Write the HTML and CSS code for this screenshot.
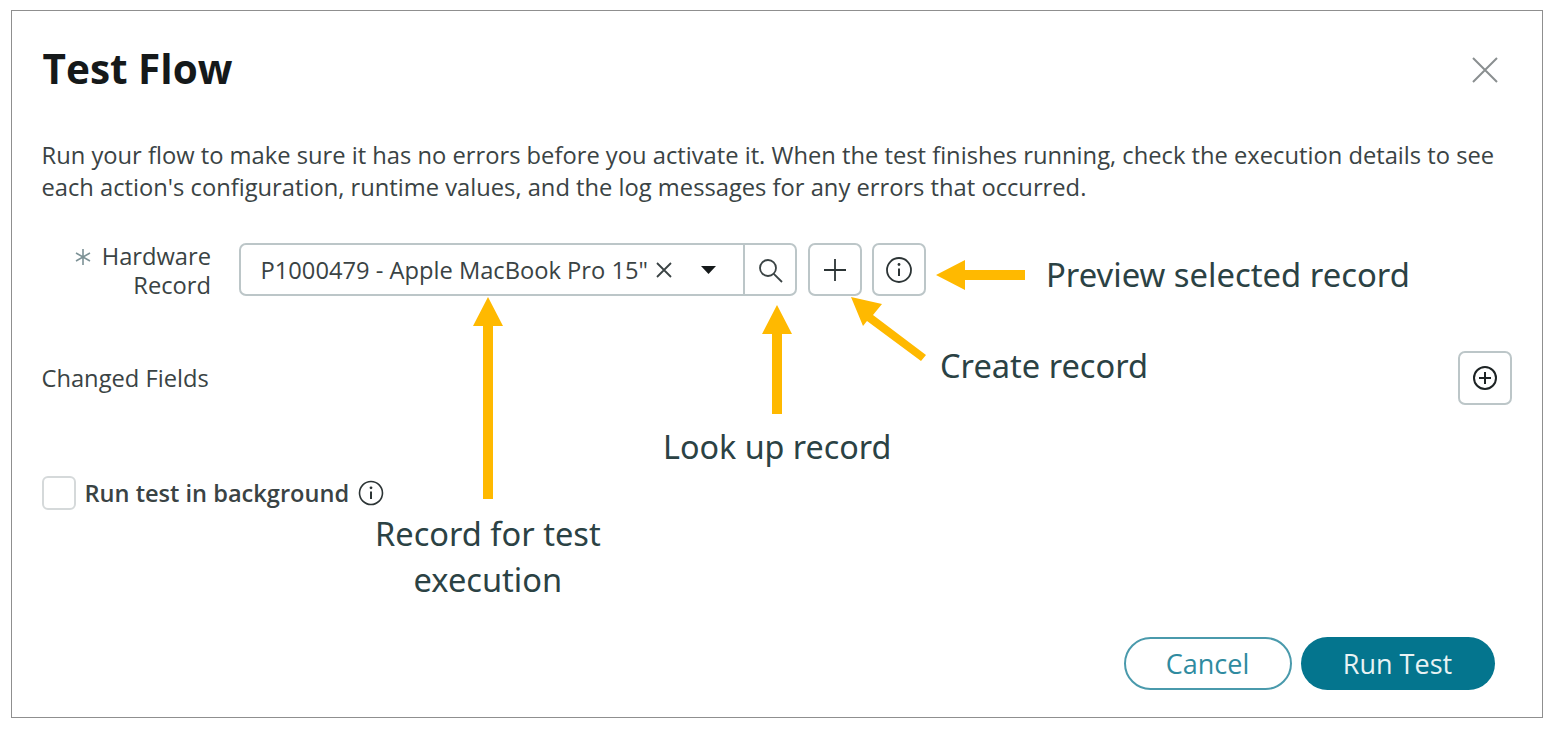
FILE: index.html
```html
<!DOCTYPE html>
<html lang="en">
<head>
    <meta charset="UTF-8">
    <title>Test Flow</title>
    <link rel="stylesheet" href="styles.css">
</head>
<body>
    <div class="dialog">
        <div class="dialog-head">
            <h1>Test Flow</h1>
            <svg class="close" width="26" height="26" viewBox="0 0 26 26"><path d="M1 1L25 25M25 1L1 25" stroke="#8a8f90" stroke-width="2" fill="none"/></svg>
        </div>
        <p class="intro">Run your flow to make sure it has no errors before you activate it. When the test finishes running, check the execution details to see<br>each action's configuration, runtime values, and the log messages for any errors that occurred.</p>

        <div class="record-row">
            <div class="record-label">
                <svg class="star" width="18" height="18" viewBox="0 0 18 18"><path d="M9 1V17M2 5L16 13M16 5L2 13" stroke="#7d9296" stroke-width="1.6" fill="none"/></svg>Hardware<br>Record
            </div>
            <div class="picker">
                <div class="picker-value">
                    <span>P1000479 - Apple MacBook Pro 15"</span>
                    <svg class="clear" width="16" height="16" viewBox="0 0 16 16"><path d="M1 1L15 15M15 1L1 15" stroke="#3a4344" stroke-width="1.8" fill="none"/></svg>
                    <svg class="caret" width="15" height="8" viewBox="0 0 15 8"><path d="M0 0H15L7.5 8Z" fill="#15191a"/></svg>
                </div>
                <div class="picker-search">
                    <svg width="26" height="26" viewBox="0 0 26 26"><circle cx="11" cy="11" r="8" stroke="#3a4344" stroke-width="1.8" fill="none"/><path d="M16.8 16.8L25 25" stroke="#3a4344" stroke-width="1.8"/></svg>
                </div>
            </div>
            <div class="icon-btn">
                <svg width="24" height="24" viewBox="0 0 24 24"><path d="M12 1V23M1 12H23" stroke="#2c3435" stroke-width="1.8"/></svg>
            </div>
            <div class="icon-btn">
                <svg width="28" height="28" viewBox="0 0 28 28"><circle cx="14" cy="14" r="12" stroke="#2c3435" stroke-width="1.8" fill="none"/><path d="M14 12.5V20" stroke="#2c3435" stroke-width="2"/><circle cx="14" cy="8.5" r="1.4" fill="#2c3435"/></svg>
            </div>
        </div>

        <div class="fields-row">
            <span>Changed Fields</span>
            <div class="icon-btn">
                <svg width="26" height="26" viewBox="0 0 26 26"><circle cx="13" cy="13" r="11" stroke="#1d2324" stroke-width="2" fill="none"/><path d="M13 7V19M7 13H19" stroke="#1d2324" stroke-width="2"/></svg>
            </div>
        </div>

        <div class="bg-row">
            <span class="check"></span>
            <span class="bg-text">Run test in background</span>
            <svg width="26" height="26" viewBox="0 0 26 26"><circle cx="13" cy="13" r="11.5" stroke="#2c3435" stroke-width="1.6" fill="none"/><path d="M13 11.5V19" stroke="#2c3435" stroke-width="2"/><circle cx="13" cy="7.8" r="1.4" fill="#2c3435"/></svg>
        </div>

        <div class="actions">
            <div class="btn btn-cancel">Cancel</div>
            <div class="btn btn-run">Run Test</div>
        </div>
    </div>

    <svg class="arrows" width="1552" height="730" viewBox="0 0 1552 730">
        <path d="M488 297L503 326H493V499H483V326H473Z"/>
        <path d="M777 305L792 334H782V414H772V334H762Z"/>
        <path d="M851 297L882 304L873 315L926 355L921 361L867 321L863 326Z"/>
        <path d="M936 275L965 260V270H1025V280H965V290Z"/>
    </svg>
    <div class="note note-preview">Preview selected record</div>
    <div class="note note-create">Create record</div>
    <div class="note note-lookup">Look up record</div>
    <div class="note note-test">Record for test<br>execution</div>
</body>
</html>
```

FILE: styles.css
```css
* {
    box-sizing: border-box;
    margin: 0;
    padding: 0;
}
body {
    background: #fff;
    font-family: "Open Sans", "Noto Sans", sans-serif;
    color: #3a4344;
    position: relative;
    height: 730px;
    overflow: hidden;
}
.dialog {
    width: 1532px;
    height: 708px;
    margin: 10px 0 0 11px;
    border: 1.5px solid #8f8f8f;
    padding: 0 30px 0 29.5px;
    display: flex;
    flex-direction: column;
}
.dialog-head {
    display: flex;
    justify-content: space-between;
    align-items: center;
    height: 118px;
}
.dialog-head h1 {
    font-size: 40.5px;
    font-weight: 700;
    color: #15191a;
    margin: -3px 0 0 1px;
}
.close {
    margin-right: 14.5px;
}
.intro {
    font-size: 23.72px;
    line-height: 32px;
    color: #3a4344;
    margin-top: 10px;
    white-space: nowrap;
}
.record-row {
    display: flex;
    align-items: center;
    gap: 10px;
    margin-top: 40px;
    height: 53px;
}
.record-label {
    width: 169.5px;
    margin-right: 17.5px;
    padding-top: 2px;
    text-align: right;
    font-size: 23.7px;
    line-height: 29px;
}
.star {
    margin-right: 10px;
    vertical-align: -1px;
}
.picker {
    display: flex;
    width: 558px;
    height: 53px;
    margin-right: 1px;
    border: 2px solid #bcc6c8;
    border-radius: 7px;
}
.picker-value {
    flex: 1;
    display: flex;
    align-items: center;
    padding-left: 20px;
    font-size: 23.7px;
    white-space: nowrap;
}
.clear {
    margin-left: 8px;
}
.caret {
    margin-left: 29px;
}
.picker-search {
    width: 52px;
    border-left: 2px solid #bcc6c8;
    display: flex;
    align-items: center;
    justify-content: center;
}
.icon-btn {
    width: 54px;
    height: 53px;
    border: 2px solid #bcc6c8;
    border-radius: 7px;
    display: flex;
    align-items: center;
    justify-content: center;
}
.fields-row {
    display: flex;
    justify-content: space-between;
    align-items: center;
    margin-top: 55px;
    font-size: 23.7px;
}
.fields-row .icon-btn {
    height: 54px;
}
.bg-row {
    display: flex;
    align-items: center;
    margin-top: 71px;
}
.check {
    width: 34px;
    height: 34px;
    border: 2px solid #d5d9da;
    border-radius: 6px;
}
.bg-text {
    font-size: 23.6px;
    font-weight: 600;
    margin: 0 9px;
}
.actions {
    display: flex;
    justify-content: flex-end;
    gap: 9px;
    margin-top: 127px;
    padding-right: 17.5px;
}
.btn {
    height: 53px;
    border-radius: 27px;
    display: flex;
    align-items: center;
    justify-content: center;
    font-size: 27px;
}
.btn-cancel {
    width: 168px;
    border: 2px solid #4a9aac;
    color: #2f8ba0;
}
.btn-run {
    width: 194px;
    background: #04758e;
    color: #e8f2f4;
}
.arrows {
    position: absolute;
    left: 0;
    top: 0;
    fill: #ffb900;
}
.note {
    position: absolute;
    font-family: "Noto Sans", "Open Sans", sans-serif;
    font-size: 32.6px;
    line-height: 46px;
    color: #2b4244;
    white-space: nowrap;
}
.note-preview {
    left: 1046px;
    top: 252px;
    font-size: 32.8px;
}
.note-create {
    left: 940px;
    top: 343px;
}
.note-lookup {
    left: 663px;
    top: 423px;
    font-size: 32.3px;
}
.note-test {
    left: 375px;
    top: 511px;
    text-align: center;
}
```
